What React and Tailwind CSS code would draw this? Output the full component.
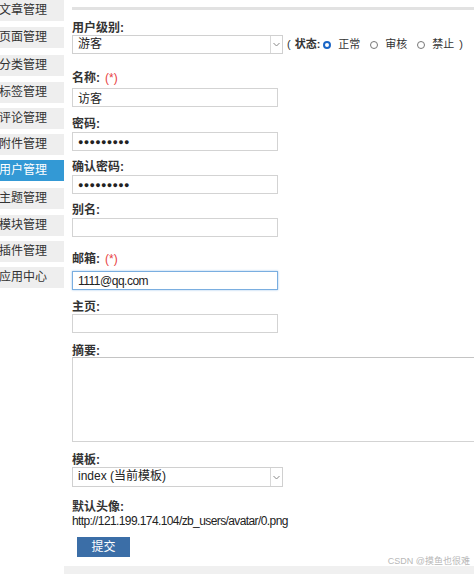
import React from "react";

const font = { fontFamily: '"Liberation Sans", "Noto Sans CJK SC", sans-serif' };

const menu = [
  { t: "文章管理", top: "mt-0" },
  { t: "页面管理", top: "mt-[6px]" },
  { t: "分类管理", top: "mt-[7px]" },
  { t: "标签管理", top: "mt-[6px]" },
  { t: "评论管理", top: "mt-[5px]" },
  { t: "附件管理", top: "mt-[5px]" },
  { t: "用户管理", top: "mt-[5px]", active: true },
  { t: "主题管理", top: "mt-[7px]" },
  { t: "模块管理", top: "mt-[6px]" },
  { t: "插件管理", top: "mt-[5px]" },
  { t: "应用中心", top: "mt-[5px]" },
];

function Label({ children, star, className = "" }) {
  return (
    <div className={"h-[14px] leading-[14px] text-[12px] font-bold text-[#333] " + className}>
      {children}
      {star && <span className="ml-[5px] font-normal text-[#e8413f]">(*)</span>}
    </div>
  );
}

function Input({ value, focus, className = "" }) {
  return (
    <input
      type="text"
      readOnly
      value={value}
      className={
        "block w-[206px] h-[19px] px-[5px] text-[#222] bg-white outline-none border " +
        (focus ? "border-[#7aaee0] shadow-[0_0_2px_#9cc4ec]" : "border-[#d3d3d3]") +
        " " +
        className
      }
      style={font}
    />
  );
}

function Select({ value, className = "" }) {
  return (
    <div className={"flex w-[211px] h-[19px] border border-[#d0d0d0] bg-white " + className}>
      <div className="flex-1 pl-[5px] text-[12px] leading-[17px] text-[#222] whitespace-nowrap">{value}</div>
      <div className="w-[12px] border-l border-[#d8d8d8] flex items-center justify-center">
        <svg width="7" height="5" viewBox="0 0 7 5">
          <path d="M0.5 1 L3.5 4 L6.5 1" fill="none" stroke="#888" strokeWidth="1" />
        </svg>
      </div>
    </div>
  );
}

function Radio({ on }) {
  return on ? (
    <span className="inline-block w-[8px] h-[8px] rounded-full border-[2px] border-[#1a66c6] bg-white" />
  ) : (
    <span className="inline-block w-[8px] h-[8px] rounded-full border border-[#777] bg-white" />
  );
}

export default function App() {
  return (
    <div className="relative w-[474px] h-[574px] overflow-hidden bg-white flex" style={font}>
      <div className="w-[64px] shrink-0 flex flex-col">
        {menu.map((m) => (
          <div
            key={m.t}
            className={
              m.top +
              " h-[21px] leading-[21px] text-[12px] whitespace-nowrap overflow-hidden -indent-[1px] " +
              (m.active ? "bg-[#3399d5] text-white" : "bg-[#eeeeee] text-[#333]")
            }
          >
            {m.t}
          </div>
        ))}
      </div>

      <div className="ml-[8px] flex-1 flex flex-col">
        <div className="mt-[7px] h-[3px] bg-[#e2e2e2]" />

        <Label className="mt-[11px]">用户级别:</Label>
        <div className="flex items-center">
          <Select value="游客" />
          <div className="ml-[4px] flex items-center text-[11px] text-[#333] whitespace-nowrap">
            <span>(</span>
            <span className="ml-[4px] font-bold">状态:</span>
            <span className="ml-[3px] flex"><Radio on /></span>
            <span className="ml-[7px]">正常</span>
            <span className="ml-[10px] flex"><Radio /></span>
            <span className="ml-[7px]">审核</span>
            <span className="ml-[10px] flex"><Radio /></span>
            <span className="ml-[7px]">禁止</span>
            <span className="ml-[5px]">)</span>
          </div>
        </div>

        <Label star className="mt-[17px]">名称:</Label>
        <Input value="访客" className="mt-[3px] text-[12px]" />

        <Label className="mt-[10px]">密码:</Label>
        <Input value="●●●●●●●●●" className="mt-[1px] text-[9px] tracking-[0.3px]" />

        <Label className="mt-[9px]">确认密码:</Label>
        <Input value="●●●●●●●●●" className="mt-[1px] text-[9px] tracking-[0.3px]" />

        <Label className="mt-[9px]">别名:</Label>
        <Input value="" className="mt-[1px]" />

        <Label star className="mt-[15px]">邮箱:</Label>
        <Input value="1111@qq.com" focus className="mt-[5px] text-[12px] tracking-[-0.5px]" />

        <Label className="mt-[10px]">主页:</Label>
        <Input value="" />

        <Label className="mt-[11px]">摘要:</Label>
        <div className="-mt-[1px] h-[85px] w-[420px] border border-[#d3d3d3] border-t-[#c4c4c4] bg-white" />

        <Label className="mt-[11px]">模板:</Label>
        <Select value="index (当前模板)" className="h-[20px]" />

        <Label className="mt-[13px]">默认头像:</Label>
        <div className="h-[14px] leading-[14px] text-[12px] tracking-[-0.6px] text-[#222] whitespace-nowrap">
          http://121.199.174.104/zb_users/avatar/0.png
        </div>

        <button className="mt-[9px] ml-[5px] w-[53px] h-[20px] bg-[#3b6ea7] text-white text-[12px] leading-[20px]">
          提交
        </button>

        <div className="mt-[9px] h-[8px] -ml-[8px] -mr-[10px] bg-[#f0f0f0]" />
      </div>

      <div className="absolute right-[4px] bottom-[6px] text-[9px] text-[#b8b8b8] whitespace-nowrap">
        CSDN @摸鱼也很难
      </div>
    </div>
  );
}
